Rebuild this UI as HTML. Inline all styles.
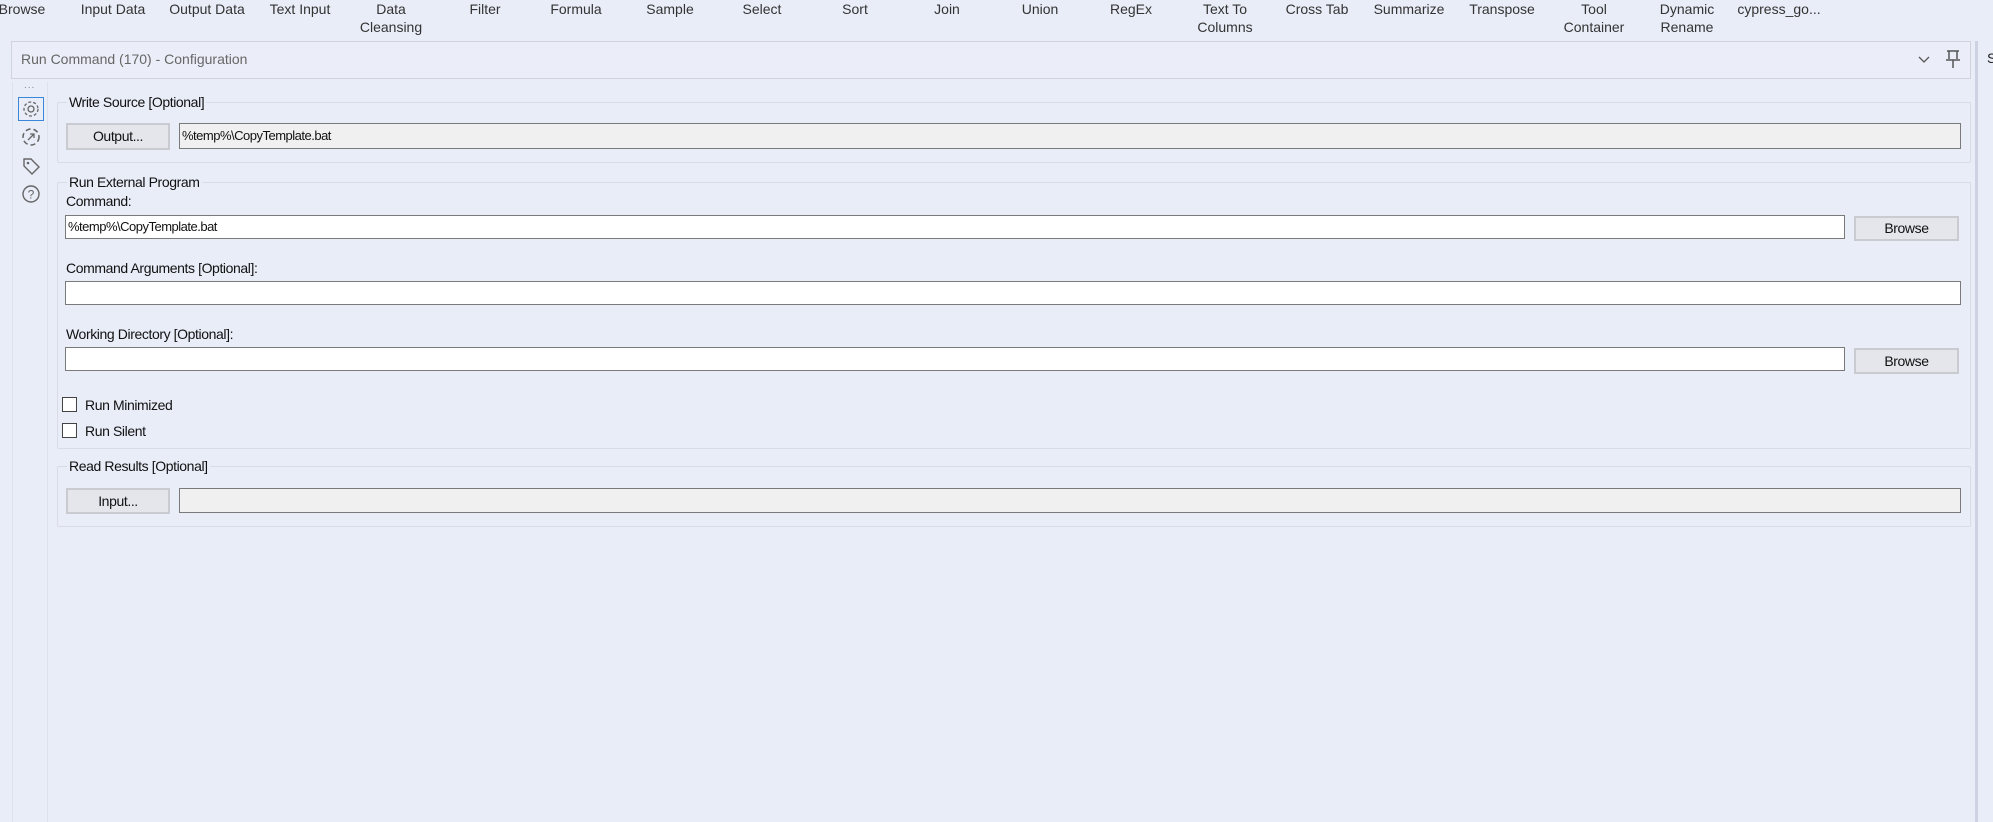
<!DOCTYPE html>
<html><head><style>
body{margin:0;width:1993px;height:822px;background:#e9edf8;font-family:"Liberation Sans",Arial,sans-serif;position:relative;overflow:hidden;color:#222}
.a{position:absolute}
.tb{position:absolute;top:0;width:100px;text-align:center;font-size:14px;line-height:18px;color:#333}
.grp{position:absolute;border:1px solid #d9dce6;border-radius:2px}
.lg{position:absolute;font-size:14px;letter-spacing:-0.4px;background:#e9edf8;padding:0 2px;color:#111}
.btn{position:absolute;background:#e4e6ec;border:2px solid #c9cbd1;box-sizing:border-box;font-size:14px;letter-spacing:-0.4px;text-align:center;color:#111}
.inp{position:absolute;border:1px solid #7a7a7a;box-sizing:border-box;font-size:13px;letter-spacing:-0.5px;padding-left:2px;color:#111}
.lbl{position:absolute;font-size:14px;letter-spacing:-0.4px;color:#111}
.cb{position:absolute;width:15px;height:15px;border:1px solid #444;box-sizing:border-box;background:#fff}
</style></head><body>
<div class="tb" style="left:-28px">Browse</div>
<div class="tb" style="left:63px">Input Data</div>
<div class="tb" style="left:157px">Output Data</div>
<div class="tb" style="left:250px">Text Input</div>
<div class="tb" style="left:341px">Data<br>Cleansing</div>
<div class="tb" style="left:435px">Filter</div>
<div class="tb" style="left:526px">Formula</div>
<div class="tb" style="left:620px">Sample</div>
<div class="tb" style="left:712px">Select</div>
<div class="tb" style="left:805px">Sort</div>
<div class="tb" style="left:897px">Join</div>
<div class="tb" style="left:990px">Union</div>
<div class="tb" style="left:1081px">RegEx</div>
<div class="tb" style="left:1175px">Text To<br>Columns</div>
<div class="tb" style="left:1267px">Cross Tab</div>
<div class="tb" style="left:1359px">Summarize</div>
<div class="tb" style="left:1452px">Transpose</div>
<div class="tb" style="left:1544px">Tool<br>Container</div>
<div class="tb" style="left:1637px">Dynamic<br>Rename</div>
<div class="tb" style="left:1729px">cypress_go...</div>

<div class="a" style="left:11px;top:41px;width:1960px;height:38px;border:1px solid #d0d3dc;box-sizing:border-box;background:#ebeef8"></div>
<div class="a" style="left:21px;top:51px;font-size:14px;color:#666">Run Command (170) - Configuration</div>
<svg class="a" style="left:1917px;top:52px" width="14" height="14"><path d="M2 5l5 5 5-5" stroke="#555" fill="none" stroke-width="1.3"/></svg>
<svg class="a" style="left:1945px;top:49px" width="16" height="20"><path d="M2 2h12M4 2v8M12 2v8M1 11h14M8 11v8" stroke="#555" fill="none" stroke-width="1.5"/></svg>
<div class="a" style="left:1975px;top:41px;width:3px;height:781px;background:#cdd3e3"></div>
<div class="a" style="left:1987px;top:50px;font-size:14px">S</div>
<div class="a" style="left:12px;top:82px;width:1px;height:740px;background:#dde1ec"></div>
<div class="a" style="left:47px;top:82px;width:1px;height:740px;background:#dde1ec"></div>
<div class="a" style="left:24px;top:80px;font-size:10px;color:#888;letter-spacing:1px">...</div>
<div class="a" style="left:18px;top:97px;width:26px;height:24px;border:1px solid #3a86d9;box-sizing:border-box"></div>
<svg class="a" style="left:21px;top:99px" width="20" height="20"><circle cx="10" cy="10" r="3" fill="none" stroke="#666" stroke-width="1.3"/><circle cx="10" cy="10" r="7" fill="none" stroke="#666" stroke-width="1.3" stroke-dasharray="3 2"/></svg>
<svg class="a" style="left:21px;top:127px" width="20" height="20"><circle cx="10" cy="10" r="8" fill="none" stroke="#666" stroke-width="1.5" stroke-dasharray="5 3"/><path d="M7 13l6-6M9 7h4v4" stroke="#666" fill="none" stroke-width="1.3"/></svg>
<svg class="a" style="left:21px;top:156px" width="20" height="20"><path d="M3 3h7l8 8-7 7-8-8z" fill="none" stroke="#666" stroke-width="1.4"/><circle cx="7" cy="7" r="1.3" fill="#666"/></svg>
<svg class="a" style="left:21px;top:184px" width="20" height="20"><circle cx="10" cy="10" r="8" fill="none" stroke="#666" stroke-width="1.4"/><text x="10" y="14.5" font-size="12" text-anchor="middle" fill="#666" font-family="Liberation Sans">?</text></svg>

<div class="grp" style="left:57px;top:102px;width:1912px;height:59px"></div>
<div class="lg" style="left:67px;top:94px">Write Source [Optional]</div>
<div class="btn" style="left:66px;top:123px;width:104px;height:27px;line-height:23px">Output...</div>
<div class="inp" style="left:179px;top:123px;width:1782px;height:26px;line-height:24px;background:#f0f0f0">%temp%\CopyTemplate.bat</div>

<div class="grp" style="left:57px;top:182px;width:1912px;height:265px"></div>
<div class="lg" style="left:67px;top:174px">Run External Program</div>
<div class="lbl" style="left:66px;top:193px">Command:</div>
<div class="inp" style="left:65px;top:215px;width:1780px;height:24px;line-height:22px;background:#fff">%temp%\CopyTemplate.bat</div>
<div class="btn" style="left:1854px;top:216px;width:105px;height:25px;line-height:21px">Browse</div>
<div class="lbl" style="left:66px;top:260px">Command Arguments [Optional]:</div>
<div class="inp" style="left:65px;top:281px;width:1896px;height:24px;background:#fff"></div>
<div class="lbl" style="left:66px;top:326px">Working Directory [Optional]:</div>
<div class="inp" style="left:65px;top:347px;width:1780px;height:24px;background:#fff"></div>
<div class="btn" style="left:1854px;top:348px;width:105px;height:26px;line-height:22px">Browse</div>
<div class="cb" style="left:62px;top:397px"></div>
<div class="lbl" style="left:85px;top:397px">Run Minimized</div>
<div class="cb" style="left:62px;top:423px"></div>
<div class="lbl" style="left:85px;top:423px">Run Silent</div>

<div class="grp" style="left:57px;top:466px;width:1912px;height:59px"></div>
<div class="lg" style="left:67px;top:458px">Read Results [Optional]</div>
<div class="btn" style="left:66px;top:488px;width:104px;height:26px;line-height:22px">Input...</div>
<div class="inp" style="left:179px;top:488px;width:1782px;height:25px;background:#f0f0f0"></div>
</body></html>
